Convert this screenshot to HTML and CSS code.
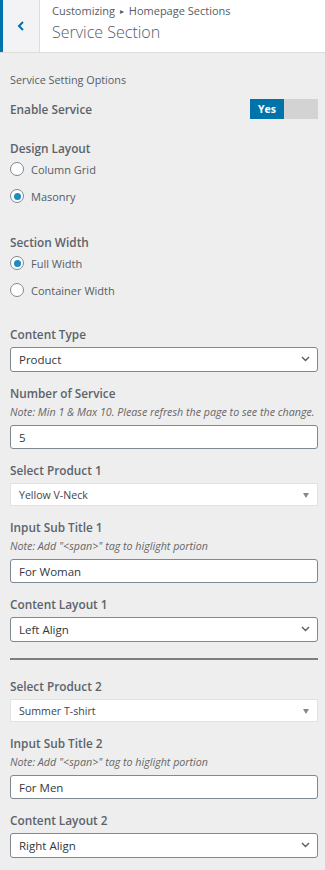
FILE: index.html
```html
<!DOCTYPE html>
<html lang="en">
<head>
<meta charset="utf-8">
<title>Service Section</title>
<link rel="stylesheet" href="styles.css">
</head>
<body>
<div class="panel">
  <header class="panel-header">
    <button class="back" type="button" aria-label="Back">
      <svg width="8" height="10" viewBox="0 0 8 10"><path d="M6 1 L2 5 L6 9" fill="none" stroke="#0073aa" stroke-width="2"/></svg>
    </button>
    <div class="titles">
      <div class="crumb">Customizing <span class="sep">&#9656;</span> Homepage Sections</div>
      <h1 class="title">Service Section</h1>
    </div>
  </header>

  <main class="controls">
    <div class="desc">Service Setting Options</div>

    <div class="toggle-row">
      <span class="label">Enable Service</span>
      <div class="toggle"><span class="on">Yes</span><span class="off"></span></div>
    </div>

    <div class="control radios-ctl">
      <div class="label">Design Layout</div>
      <label class="radio first"><span class="dot"></span>Column Grid</label>
      <label class="radio"><span class="dot checked"></span>Masonry</label>
    </div>

    <div class="control radios-ctl wide-gap">
      <div class="label">Section Width</div>
      <label class="radio first"><span class="dot checked"></span>Full Width</label>
      <label class="radio"><span class="dot"></span>Container Width</label>
    </div>

    <div class="control wide-gap2">
      <div class="label">Content Type</div>
      <div class="select">Product<span class="chev"><svg width="9" height="6" viewBox="0 0 9 6"><path d="M1 1 L4.5 4.5 L8 1" fill="none" stroke="#555d66" stroke-width="1.4"/></svg></span></div>
    </div>

    <div class="control">
      <div class="label">Number of Service</div>
      <div class="note">Note: Min 1 &amp; Max 10. Please refresh the page to see the change.</div>
      <div class="input after-note">5</div>
    </div>

    <div class="control">
      <div class="label">Select Product 1</div>
      <div class="select2">Yellow V-Neck<span class="tri"></span></div>
    </div>

    <div class="control">
      <div class="label">Input Sub Title 1</div>
      <div class="note">Note: Add "&lt;span&gt;" tag to higlight portion</div>
      <div class="input after-note">For Woman</div>
    </div>

    <div class="control">
      <div class="label">Content Layout 1</div>
      <div class="select">Left Align<span class="chev"><svg width="9" height="6" viewBox="0 0 9 6"><path d="M1 1 L4.5 4.5 L8 1" fill="none" stroke="#555d66" stroke-width="1.4"/></svg></span></div>
    </div>

    <hr class="divider">

    <div class="control after-hr">
      <div class="label">Select Product 2</div>
      <div class="select2">Summer T-shirt<span class="tri"></span></div>
    </div>

    <div class="control">
      <div class="label">Input Sub Title 2</div>
      <div class="note">Note: Add "&lt;span&gt;" tag to higlight portion</div>
      <div class="input after-note">For Men</div>
    </div>

    <div class="control">
      <div class="label">Content Layout 2</div>
      <div class="select">Right Align<span class="chev"><svg width="9" height="6" viewBox="0 0 9 6"><path d="M1 1 L4.5 4.5 L8 1" fill="none" stroke="#555d66" stroke-width="1.4"/></svg></span></div>
    </div>
  </main>
</div>
</body>
</html>
```
FILE: styles.css
```css
* { box-sizing: border-box; }
html, body { margin: 0; padding: 0; }
body {
  background: #eeeeee;
  font-family: "Open Sans", "Noto Sans", sans-serif;
  color: #555d66;
  font-size: 11px;
}
.panel { width: 325px; }

.panel-header {
  display: flex;
  height: 53px;
  background: #fff;
  border-bottom: 1px solid #dddddd;
}
.back {
  width: 40px;
  height: 52px;
  padding: 0;
  margin: 0;
  border: 0;
  border-left: 3px solid #0073aa;
  border-right: 1px solid #dddddd;
  background: #f3f3f5;
  display: flex;
  align-items: center;
  justify-content: center;
}
.titles { padding-left: 12px; padding-top: 3px; }
.crumb { font-size: 11px; line-height: 16px; color: #555d66; }
.crumb .sep { font-size: 8px; vertical-align: 1px; padding: 0 2px; }
.title {
  margin: 0;
  font-size: 16px;
  font-weight: 300;
  line-height: 26px;
  color: #555d66;
}

.controls { padding: 19px 7px 20px 10px; }
.desc { line-height: 16px; font-size: 10.8px; }

.label {
  font-size: 11.8px;
  font-weight: 600;
  line-height: 18px;
  color: #5c636a;
}
.toggle-row {
  margin-top: 11px;
  height: 20px;
  display: flex;
  align-items: center;
  justify-content: space-between;
}
.toggle { display: flex; width: 68px; height: 20px; }
.toggle .on {
  width: 34px;
  background: #0073aa;
  color: #fff;
  font-weight: 700;
  font-size: 10.5px;
  line-height: 20px;
  text-align: center;
}
.toggle .off { width: 34px; background: #d3d3d3; }

.control { margin-top: 12px; }
.radios-ctl { margin-top: 20px; }
.radios-ctl.wide-gap { margin-top: 28px; }
.wide-gap2 { margin-top: 26px; }

.radio {
  display: flex;
  align-items: center;
  height: 18px;
  margin-top: 9px;
  font-size: 11px;
}
.radio.first { margin-top: 3px; }
.dot {
  width: 14px;
  height: 14px;
  border: 1px solid #7e8993;
  border-radius: 50%;
  background: #fff;
  margin-right: 7px;
  display: flex;
  align-items: center;
  justify-content: center;
  flex: none;
}
.dot.checked::after {
  content: "";
  width: 7px;
  height: 7px;
  border-radius: 50%;
  background: #1e8cbe;
}

.select, .input, .select2 {
  margin-top: 4px;
  background: #fff;
  font-size: 11.5px;
  color: #32373c;
  display: flex;
  align-items: center;
  padding-left: 8px;
  position: relative;
}
.select {
  height: 25px;
  border: 1px solid #7e8993;
  border-radius: 3px;
}
.chev { position: absolute; right: 7px; top: 8px; display: flex; }
.input {
  height: 24px;
  border: 1px solid #7e8993;
  border-radius: 3px;
}
.input.after-note { margin-top: 5px; }
.select2 {
  height: 23px;
  border: 1px solid #e2e2e2;
  font-size: 10.6px;
  color: #444;
}
.tri {
  position: absolute;
  right: 8px;
  top: 9px;
  width: 0;
  height: 0;
  border-left: 3.5px solid transparent;
  border-right: 3.5px solid transparent;
  border-top: 5px solid #888;
}
.note {
  margin-top: 2px;
  font-style: italic;
  font-size: 10.7px;
  line-height: 16px;
  color: #666;
}
.divider {
  margin: 16px 0 0 0;
  height: 2px;
  border: 0;
  background: #7e7e7e;
}
.control.after-hr { margin-top: 17px; }
```
